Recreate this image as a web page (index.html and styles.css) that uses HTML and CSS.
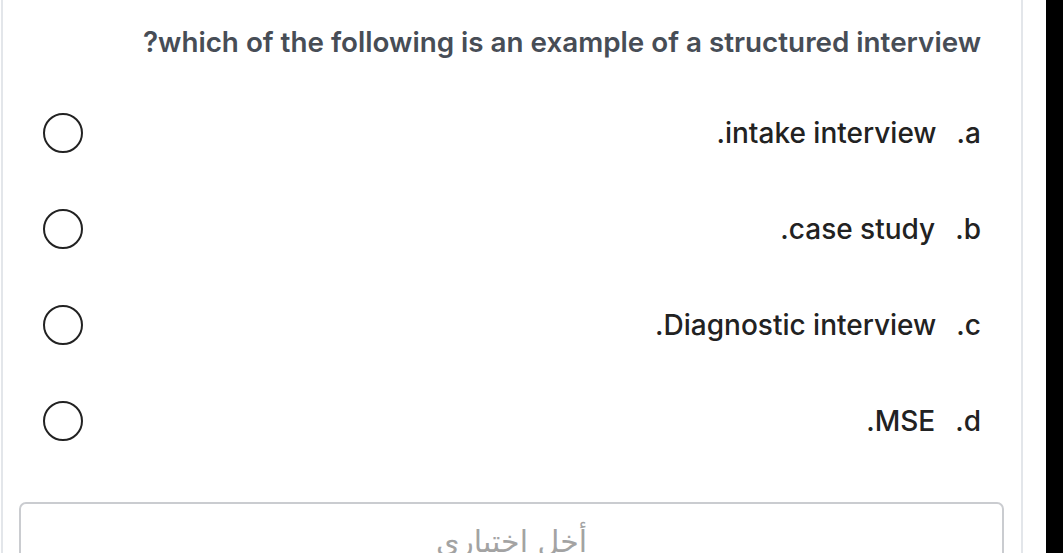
FILE: index.html
```html
<!DOCTYPE html>
<html lang="en">
<head>
    <meta charset="UTF-8">
    <meta name="viewport" content="width=device-width, initial-scale=1.0">
    <title>Question</title>
    <link rel="stylesheet" href="styles.css">
</head>
<body>
    <div class="page">
        <div class="card">
            <h2 class="question" dir="rtl">which of the following is an example of a structured interview?</h2>

            <div class="options">
                <label class="option">
                    <span class="radio"></span>
                    <span class="answer" dir="rtl"><span class="letter">a.</span><span>intake interview.</span></span>
                </label>
                <label class="option">
                    <span class="radio"></span>
                    <span class="answer" dir="rtl"><span class="letter">b.</span><span>case study.</span></span>
                </label>
                <label class="option">
                    <span class="radio"></span>
                    <span class="answer" dir="rtl"><span class="letter">c.</span><span>Diagnostic interview.</span></span>
                </label>
                <label class="option">
                    <span class="radio"></span>
                    <span class="answer" dir="rtl"><span class="letter">d.</span><span>MSE.</span></span>
                </label>
            </div>

            <button class="clear" dir="rtl">أخلِ اختياري</button>
        </div>
        <div class="edge"></div>
    </div>
</body>
</html>
```

FILE: styles.css
```css
html, body {
    margin: 0;
    padding: 0;
    height: 100%;
    overflow: hidden;
}
body {
    background: #ffffff;
    font-family: Inter, "DejaVu Sans", sans-serif;
}
.page {
    display: flex;
    height: 100%;
    padding-left: 1px;
}
.card {
    width: 1018px;
    border-left: 2px solid #e3e6ea;
    border-right: 2px solid #e3e6ea;
    display: flex;
    flex-direction: column;
}
.edge {
    margin-left: 23px;
    flex: 1;
    background: #000000;
}
.question {
    margin: 25px 40px 0 0;
    font-size: 27.8px;
    font-weight: 600;
    line-height: 34px;
    color: #474d56;
    text-align: right;
    white-space: nowrap;
}
.options {
    margin-top: 26px;
    display: flex;
    flex-direction: column;
}
.option {
    height: 96px;
    display: flex;
    align-items: center;
    justify-content: space-between;
    padding: 0 40px 0 40px;
}
.radio {
    width: 36px;
    height: 36px;
    border: 2px solid #222222;
    border-radius: 50%;
}
.answer {
    display: flex;
    gap: 20px;
    font-size: 28px;
    color: #222222;
    font-weight: 500;
}
.clear {
    margin: 33px 17px 0 16px;
    height: 80px;
    border: 2px solid #caccd0;
    border-radius: 7px;
    background: #ffffff;
    font-family: "DejaVu Sans", sans-serif;
    font-size: 30px;
    color: #a3a3a3;
    padding: 20px 0 0 0;
    text-align: center;
    align-self: stretch;
    display: block;
}
```
